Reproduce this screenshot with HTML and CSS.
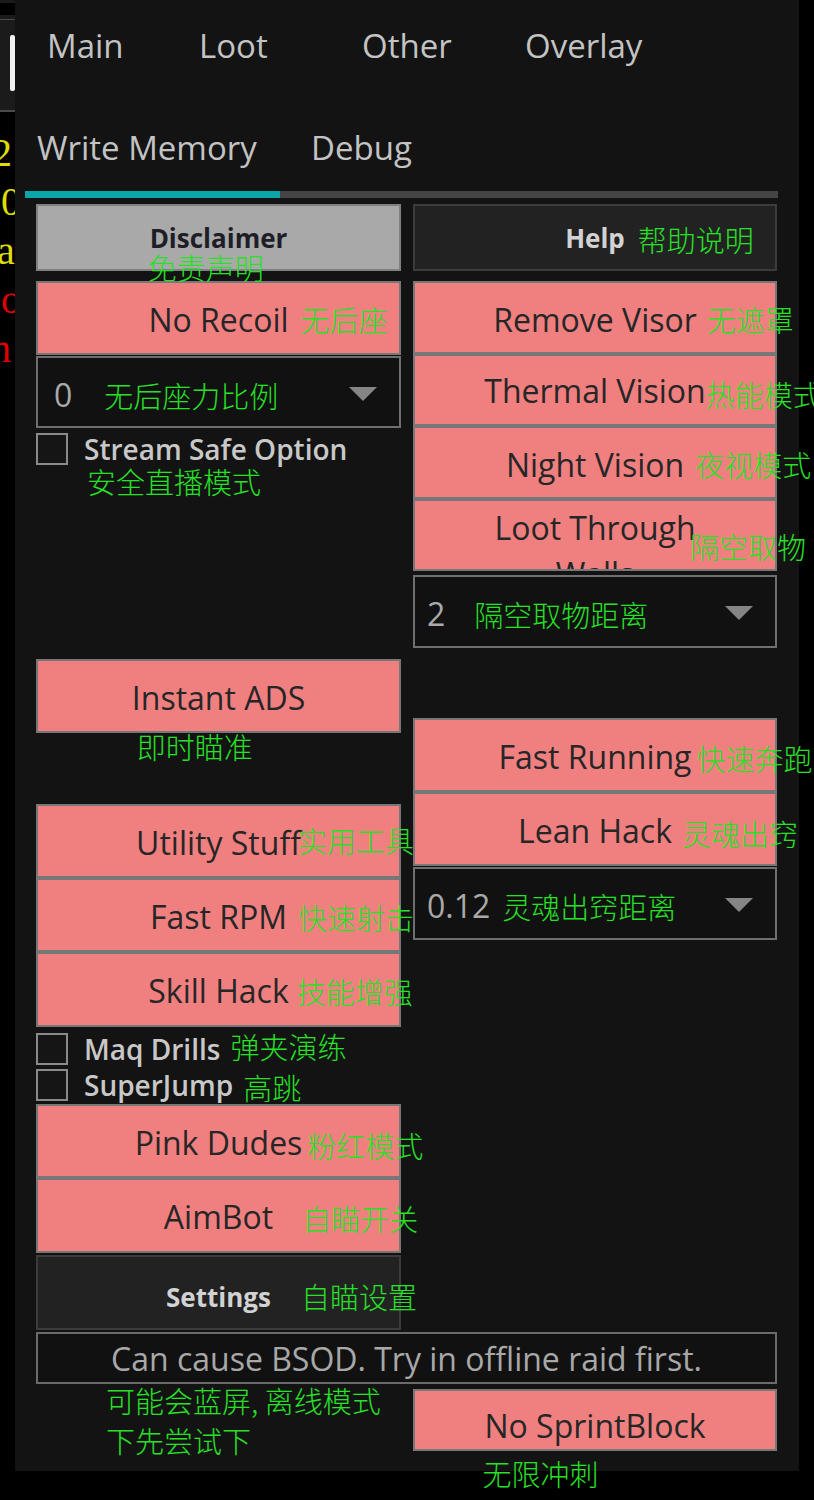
FILE: index.html
```html
<!DOCTYPE html>
<html lang="zh-CN">
<head>
<meta charset="utf-8">
<title>Write Memory</title>
<link rel="stylesheet" href="styles.css">
</head>
<body>
<div class="screen">
  <div class="strip-l">
    <div class="sl-top">
      <div class="sl-black"></div>
      <div class="sl-line"></div>
      <div class="sl-knob"></div>
    </div>
    <div class="sl-text">
      <span class="sl-ch yel s1">2</span>
      <span class="sl-ch yel s2">0</span>
      <span class="sl-ch yel s3">a</span>
      <span class="sl-ch red s4">o</span>
      <span class="sl-ch red s5">n</span>
    </div>
  </div>

  <div class="panel">
    <div class="tabs">
      <div class="tabrow r1">
        <span class="tab t-main">Main</span>
        <span class="tab t-loot">Loot</span>
        <span class="tab t-other">Other</span>
        <span class="tab">Overlay</span>
      </div>
      <div class="tabrow r2">
        <span class="tab t-write">Write Memory</span>
        <span class="tab">Debug</span>
      </div>
    </div>
    <div class="tabbar"><div class="tabbar-fill"></div></div>

    <div class="content">
      <div class="cols">
        <div class="col">
          <div class="btn gray bold"><span class="lbl">Disclaimer<span class="ann a-disc">免责声明</span></span></div>
          <div class="btn pink m10"><span class="lbl">No Recoil<span class="ann a-norecoil">无后座</span></span></div>
          <div class="dd dd-l">
            <span class="dd-val">0</span><span class="ann-in g32">无后座力比例</span>
            <span class="dd-arrow"></span>
          </div>
          <div class="chk m5">
            <span class="box"></span>
            <span class="clbl">Stream Safe Option<span class="ann a-stream">安全直播模式</span></span>
          </div>

          <div class="btn pink m194"><span class="lbl">Instant ADS<span class="ann a-ads">即时瞄准</span></span></div>

          <div class="btn pink m71"><span class="lbl">Utility Stuff<span class="ann a-util">实用工具</span></span></div>
          <div class="btn pink"><span class="lbl">Fast RPM<span class="ann a-rpm">快速射击</span></span></div>
          <div class="btn pink h75"><span class="lbl">Skill Hack<span class="ann a-skill">技能增强</span></span></div>

          <div class="chk m6">
            <span class="box"></span>
            <span class="clbl">Maq Drills<span class="ann a-maq">弹夹演练</span></span>
          </div>
          <div class="chk m4">
            <span class="box"></span>
            <span class="clbl">SuperJump<span class="ann a-jump">高跳</span></span>
          </div>

          <div class="btn pink m3"><span class="lbl">Pink Dudes<span class="ann a-pink">粉红模式</span></span></div>
          <div class="btn pink h75"><span class="lbl">AimBot<span class="ann a-aim">自瞄开关</span></span></div>
          <div class="btn dark bold settings m2"><span class="lbl">Settings<span class="ann a-set">自瞄设置</span></span></div>
        </div>

        <div class="col">
          <div class="btn dark bold"><span class="lbl">Help<span class="ann a-help">帮助说明</span></span></div>
          <div class="btn pink rh m10"><span class="lbl">Remove Visor<span class="ann a-visor">无遮罩</span></span></div>
          <div class="btn pink rh thermal"><span class="lbl">Thermal Vision<span class="ann a-thermal">热能模式</span></span></div>
          <div class="btn pink rh"><span class="lbl">Night Vision<span class="ann a-night">夜视模式</span></span></div>
          <div class="btn pink rh loot">
            <div class="clip">Loot Through<br>Walls</div>
            <span class="ann a-loot">隔空取物</span>
          </div>
          <div class="dd dd-r m4">
            <span class="dd-val">2</span><span class="ann-in g29">隔空取物距离</span>
            <span class="dd-arrow"></span>
          </div>

          <div class="btn pink m70"><span class="lbl">Fast Running<span class="ann a-run">快速奔跑</span></span></div>
          <div class="btn pink"><span class="lbl">Lean Hack<span class="ann a-lean">灵魂出窍</span></span></div>
          <div class="dd dd-r m1">
            <span class="dd-val">0.12</span><span class="ann-in g13">灵魂出窍距离</span>
            <span class="dd-arrow"></span>
          </div>
        </div>
      </div>

      <div class="warn">Can cause BSOD. Try in offline raid first.</div>

      <div class="bottom">
        <div class="note">可能会蓝屏, 离线模式<br>下先尝试下</div>
        <div class="btn pink short"><span class="lbl">No SprintBlock<span class="ann a-sprint">无限冲刺</span></span></div>
      </div>
    </div>
  </div>

  <div class="strip-r"></div>
</div>
</body>
</html>
```

FILE: styles.css
```css
html, body {
  margin: 0;
  padding: 0;
  background: #000;
}

body {
  font-family: "Open Sans", "Noto Sans", sans-serif;
}

.screen {
  display: flex;
  width: 814px;
  height: 1500px;
  overflow: hidden;
  background: #000;
}

/* ---------- left strip (neighbouring window, clipped) ---------- */
.strip-l {
  width: 15px;
  flex: none;
  overflow: hidden;
  background: #000;
  display: flex;
  flex-direction: column;
}

.sl-top {
  height: 112px;
  flex: none;
  box-sizing: border-box;
  background: #1b1b1b;
  border-bottom: 2px solid #4a4a4a;
  display: flex;
  flex-direction: column;
}

.sl-black {
  height: 12px;
  margin-top: 3px;
  background: #000;
}

.sl-line {
  height: 1px;
  margin-top: 4px;
  background: #4a4a4a;
}

.sl-knob {
  width: 5px;
  height: 56px;
  margin: 15px 0 0 10px;
  background: #f2f2f2;
  border-radius: 2px;
}

.sl-text {
  padding-top: 16px;
  font-family: "Liberation Serif", serif;
  font-size: 40px;
  line-height: 49px;
  white-space: nowrap;
}

.sl-ch { display: block; }
.yel { color: #dede00; }
.red { color: #e00000; }
.s1 { margin-left: -8px; }
.s2 { margin-left: 1px; }
.s3 { margin-left: -3px; }
.s4 { margin-left: 1px; }
.s5 { margin-left: -9px; }

.strip-r {
  flex: 1;
  background: #000;
}

/* ---------- panel ---------- */
.panel {
  width: 784px;
  height: 1471px;
  flex: none;
  background: #131313;
  position: relative;
}

.tabs {
  padding-top: 23px;
}

.tabrow {
  display: flex;
  font-size: 33px;
  line-height: 45px;
  color: #c3c3c3;
  white-space: nowrap;
}

.r1 { padding-left: 32px; }
.r2 { padding-left: 22px; margin-top: 57px; }

.t-main { width: 152px; }
.t-loot { width: 163px; }
.t-other { width: 163px; }
.t-write { width: 274px; }

.tabbar {
  margin: 21px 0 0 10px;
  width: 753px;
  height: 7px;
  background: #444;
}

.tabbar-fill {
  width: 255px;
  height: 100%;
  background: #0aa6a9;
}

.content {
  margin: 6px 0 0 21px;
  width: 741px;
}

.cols {
  display: grid;
  grid-template-columns: 365px 364px;
  column-gap: 12px;
  align-items: start;
}

.col {
  display: flex;
  flex-direction: column;
}

/* ---------- buttons ---------- */
.btn {
  box-sizing: border-box;
  height: 74px;
  border: 2px solid #777;
  display: flex;
  justify-content: center;
  align-items: flex-start;
  padding-top: 15px;
  font-size: 32px;
  line-height: 44px;
  white-space: nowrap;
}

.pink {
  background: #f08080;
  color: #262626;
}

.gray {
  height: 67px;
  background: #a9a9a9;
  border-color: #808080;
  color: #1e1e28;
}

.dark {
  height: 67px;
  background: #222;
  border-color: #3c3c3c;
  color: #d2d2d2;
}

.bold {
  font-size: 26px;
  font-weight: 700;
  line-height: 36px;
  padding-top: 14px;
}

.settings {
  height: 75px;
  padding-top: 22px;
}

.rh { height: 72.5px; }
.h75 { height: 75px; }

.thermal { padding-top: 13px; }

.short {
  height: 62px;
  padding-top: 13px;
}

.loot {
  position: relative;
  padding-top: 0;
}

.clip {
  width: 100%;
  height: 100%;
  overflow: hidden;
  text-align: center;
  box-sizing: border-box;
  padding-top: 4px;
  line-height: 46px;
}

.lbl { position: relative; }

/* green overlay annotations */
.ann {
  position: absolute;
  left: 100%;
  top: 6px;
  margin-left: 10px;
  font-family: "Noto Sans CJK SC", sans-serif;
  font-size: 29px;
  font-weight: 300;
  line-height: 32px;
  color: #27e027;
  white-space: nowrap;
}

.a-disc { left: -2px; margin-left: 0; top: 31px; }
.a-help { top: 3px; margin-left: 13px; }
.a-norecoil { top: 5px; margin-left: 12px; }
.a-visor { top: 5px; margin-left: 10px; }
.a-thermal { top: 9px; margin-left: 0; }
.a-night { top: 5px; margin-left: 11px; }
.a-loot { left: 275px; top: 29px; margin-left: 0; }
.a-stream { left: 3px; margin-left: 0; top: 35px; }
.a-ads { left: 5px; margin-left: 0; top: 54px; }
.a-run { top: 7px; margin-left: 5px; }
.a-lean { top: 8px; margin-left: 10px; }
.a-util { top: 3px; margin-left: -3px; }
.a-rpm { top: 6px; margin-left: 11px; }
.a-skill { top: 6px; margin-left: 8px; }
.a-maq { top: 0; margin-left: 10px; }
.a-jump { top: 5px; margin-left: 10px; }
.a-pink { top: 8px; margin-left: 5px; }
.a-aim { top: 7px; margin-left: 29px; }
.a-set { top: 1px; margin-left: 30px; }
.a-sprint { left: -2px; margin-left: 0; top: 53px; }

/* ---------- dropdowns ---------- */
.dd {
  box-sizing: border-box;
  height: 73px;
  border: 2px solid #6f6f6f;
  background: #111;
  display: flex;
  align-items: flex-start;
  padding-top: 15px;
  font-size: 32px;
  line-height: 44px;
  color: #a9a9a9;
  white-space: nowrap;
}

.dd-l { height: 72px; margin-top: 1px; padding-left: 16px; }
.dd-r { padding-left: 12px; }

.ann-in {
  font-family: "Noto Sans CJK SC", sans-serif;
  font-size: 29px;
  font-weight: 300;
  color: #27e027;
}

.g32 { margin-left: 32px; }
.g29 { margin-left: 29px; }
.g13 { margin-left: 12px; }

.dd-arrow {
  margin: 14px 22px 0 auto;
  width: 0;
  height: 0;
  border-left: 14px solid transparent;
  border-right: 14px solid transparent;
  border-top: 14px solid #858585;
}

/* ---------- checkboxes ---------- */
.chk {
  display: flex;
  align-items: center;
  height: 32px;
}

.box {
  box-sizing: border-box;
  width: 32px;
  height: 32px;
  flex: none;
  border: 2px solid #8a8a8a;
  background: #151515;
  margin-right: 16px;
}

.clbl {
  position: relative;
  font-size: 28px;
  font-weight: 600;
  line-height: 38px;
  color: #c8c8c8;
  white-space: nowrap;
}

/* ---------- spacing helpers ---------- */
.m1 { margin-top: 1px; }
.m2 { margin-top: 2px; }
.m3 { margin-top: 3px; }
.m4 { margin-top: 4px; }
.m5 { margin-top: 5px; }
.m6 { margin-top: 6px; }
.m10 { margin-top: 10px; }
.m70 { margin-top: 70px; }
.m71 { margin-top: 71px; }
.m194 { margin-top: 194px; }

/* ---------- bottom ---------- */
.warn {
  box-sizing: border-box;
  height: 52px;
  margin-top: 2px;
  border: 2px solid #6a6a6a;
  background: #111;
  color: #a8a8a8;
  font-size: 32px;
  line-height: 44px;
  padding-top: 3px;
  text-align: center;
  white-space: nowrap;
}

.bottom {
  display: grid;
  grid-template-columns: 365px 364px;
  column-gap: 12px;
  margin-top: 5px;
  align-items: start;
}

.note {
  margin-top: -9px;
  padding-left: 70px;
  font-family: "Noto Sans CJK SC", sans-serif;
  font-size: 29px;
  font-weight: 300;
  line-height: 40px;
  color: #27e027;
  white-space: nowrap;
}
```
